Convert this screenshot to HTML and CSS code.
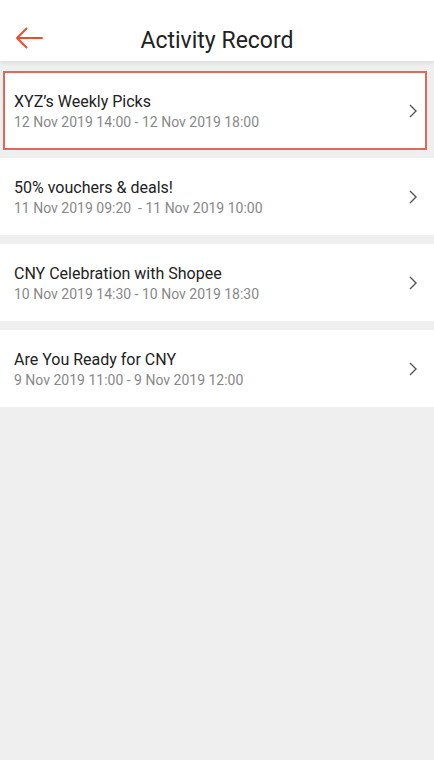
FILE: index.html
```html
<!DOCTYPE html>
<html>
<head>
<meta charset="utf-8">
<link rel="stylesheet" href="styles.css">
</head>
<body>
<header class="topbar">
  <button class="back" aria-label="Back">
    <svg width="28" height="22" viewBox="0 0 28 22"><path d="M27 11H2M11.5 1.5L2 11l9.5 9.5" fill="none" stroke="#ee4d2d" stroke-width="2" stroke-linecap="round" stroke-linejoin="round"/></svg>
  </button>
  <h1 class="title">Activity Record</h1>
</header>
<main class="list">
  <a class="item selected">
    <div class="text">
      <div class="name">XYZ’s Weekly Picks</div>
      <div class="date">12 Nov 2019 14:00 - 12 Nov 2019 18:00</div>
    </div>
    <svg class="chev" width="10" height="14" viewBox="0 0 10 14"><path d="M2 1l6 6-6 6" fill="none" stroke="#555" stroke-width="1.4"/></svg>
  </a>
  <a class="item">
    <div class="text">
      <div class="name">50% vouchers &amp; deals!</div>
      <div class="date">11 Nov 2019 09:20 &nbsp;- 11 Nov 2019 10:00</div>
    </div>
    <svg class="chev" width="10" height="14" viewBox="0 0 10 14"><path d="M2 1l6 6-6 6" fill="none" stroke="#555" stroke-width="1.4"/></svg>
  </a>
  <a class="item">
    <div class="text">
      <div class="name">CNY Celebration with Shopee</div>
      <div class="date">10 Nov 2019 14:30 - 10 Nov 2019 18:30</div>
    </div>
    <svg class="chev" width="10" height="14" viewBox="0 0 10 14"><path d="M2 1l6 6-6 6" fill="none" stroke="#555" stroke-width="1.4"/></svg>
  </a>
  <a class="item">
    <div class="text">
      <div class="name">Are You Ready for CNY</div>
      <div class="date">9 Nov 2019 11:00 - 9 Nov 2019 12:00</div>
    </div>
    <svg class="chev" width="10" height="14" viewBox="0 0 10 14"><path d="M2 1l6 6-6 6" fill="none" stroke="#555" stroke-width="1.4"/></svg>
  </a>
</main>
</body>
</html>
```
FILE: styles.css
```css
html, body {
  margin: 0;
  padding: 0;
  height: 100%;
}
body {
  background: #efefef;
  font-family: Roboto, "Noto Sans", sans-serif;
  width: 434px;
  height: 760px;
  overflow: hidden;
}
.topbar {
  position: relative;
  height: 61px;
  box-sizing: border-box;
  padding-top: 29px;
  background: #fff;
  display: flex;
  align-items: flex-start;
  justify-content: center;
  box-shadow: 0 2px 4px rgba(0,0,0,0.08);
  z-index: 1;
}
.back {
  position: absolute;
  left: 15px;
  top: 27px;
  padding: 0;
  border: 0;
  background: none;
  display: flex;
}
.title {
  margin: 0;
  font-size: 23px;
  font-weight: 400;
  color: #222;
  line-height: 23px;
}
.list {
  display: flex;
  flex-direction: column;
  gap: 9px;
  padding-top: 11px;
}
.item {
  display: flex;
  align-items: center;
  background: #fff;
  height: 77px;
  padding: 0 16px 0 14px;
  box-sizing: border-box;
}
.item.selected {
  outline: 2px solid #e0685a;
  outline-offset: -1px;
  margin: 0 8px 0 4px;
  padding-left: 10px;
  padding-right: 8px;
}
.text {
  flex: 1;
  display: flex;
  flex-direction: column;
  gap: 1px;
  padding-top: 2px;
}
.name {
  font-size: 16px;
  line-height: 20px;
  color: #222;
}
.date {
  font-size: 14px;
  line-height: 18px;
  color: #888;
}
.chev {
  flex: none;
}
```
